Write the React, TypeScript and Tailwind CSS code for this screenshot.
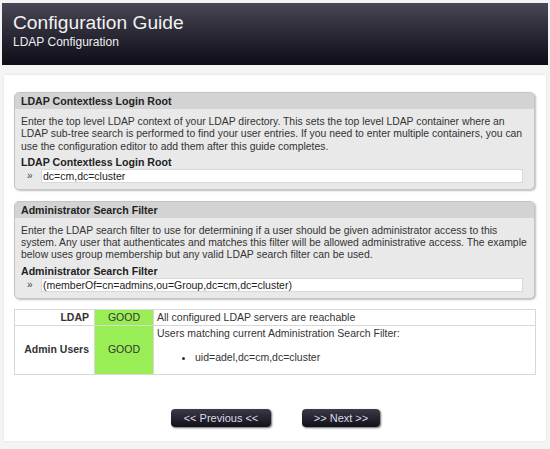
import React from "react";

function Section({
  title,
  text,
  label,
  value,
}: {
  title: string;
  text: string;
  label: string;
  value: string;
}) {
  return (
    <div className="rounded-[5px] border border-[#c4c4c4] bg-[#e9e9e9] shadow-[1px_1px_2px_rgba(0,0,0,0.25)] overflow-hidden">
      <div className="h-[16px] bg-[#d3d3d3] px-[6px] text-[10.6px] font-bold leading-[16px] text-[#222]">
        {title}
      </div>
      <div className="pl-[6px] pr-[3px] pt-[7px] pb-[6px]">
        <p className="text-[10.4px] leading-[12.3px] text-[#333]">{text}</p>
        <div className="mt-[3px] text-[10.6px] font-bold leading-[13px] text-[#222]">{label}</div>
        <div className="flex h-[14px] items-center">
          <span className="w-[20px] pl-[6px] text-[10px] text-[#444]">»</span>
          <div className="h-[14px] flex-1 mr-[8px] border border-[#d8d8d8] bg-white px-[1px] text-[10.5px] leading-[12px] text-[#222]">
            {value}
          </div>
        </div>
      </div>
    </div>
  );
}

export default function App() {
  return (
    <div
      className="h-[449px] w-[550px] bg-[#f4f4f4] pt-[3px]"
      style={{ fontFamily: '"Liberation Sans", Arial, sans-serif' }}
    >
      <div className="mx-[2px] h-[62px] bg-gradient-to-b from-[#4a4756] to-[#0e0d17] px-[11px] pt-[8px]">
        <div className="text-[19.2px] leading-[24px] text-[#f2f2f2]">Configuration Guide</div>
        <div className="text-[12px] leading-[14px] text-[#eeeeee]">LDAP Configuration</div>
      </div>
      <div className="mx-[4px] mt-[10px] h-[366px] bg-white px-[10px] pt-[17px] shadow-[0_0_2px_rgba(0,0,0,0.1)]">
        <div className="mr-[1px]">
          <Section
            title="LDAP Contextless Login Root"
            text="Enter the top level LDAP context of your LDAP directory. This sets the top level LDAP container where an LDAP sub-tree search is performed to find your user entries. If you need to enter multiple containers, you can use the configuration editor to add them after this guide completes."
            label="LDAP Contextless Login Root"
            value="dc=cm,dc=cluster"
          />
        </div>
        <div className="mt-[11px] mr-[1px]">
          <Section
            title="Administrator Search Filter"
            text="Enter the LDAP search filter to use for determining if a user should be given administrator access to this system. Any user that authenticates and matches this filter will be allowed administrative access. The example below uses group membership but any valid LDAP search filter can be used."
            label="Administrator Search Filter"
            value="(memberOf=cn=admins,ou=Group,dc=cm,dc=cluster)"
          />
        </div>
        <table className="mt-[10px] w-[522px] border-collapse border border-[#c8c8c8] text-[10.5px] text-[#333]">
          <tbody>
            <tr className="h-[16px]">
              <td className="w-[80px] border border-[#d8d8d8] pr-[5px] text-right font-bold leading-[14px]">LDAP</td>
              <td className="w-[59px] border border-[#d8d8d8] bg-[#99ee55] text-center leading-[14px]">GOOD</td>
              <td className="border border-[#d8d8d8] px-[3px] leading-[14px]">All configured LDAP servers are reachable</td>
            </tr>
            <tr className="h-[49px]">
              <td className="border border-[#d8d8d8] pr-[5px] text-right font-bold">Admin Users</td>
              <td className="border border-[#d8d8d8] bg-[#99ee55] text-center">GOOD</td>
              <td className="border border-[#d8d8d8] px-[3px] pb-[8px] align-top leading-[14px]">
                <div>Users matching current Administration Search Filter:</div>
                <ul className="mt-[10px] list-disc pl-[38px]">
                  <li>uid=adel,dc=cm,dc=cluster</li>
                </ul>
              </td>
            </tr>
          </tbody>
        </table>
        <div className="mt-[34px] flex justify-center gap-[31px] pl-[1px]">
          <button className="h-[18px] w-[100px] rounded-[4px] bg-gradient-to-b from-[#3c3a48] to-[#12111a] text-[11px] leading-[18px] text-[#dcdce8] shadow-[1px_1px_2px_rgba(0,0,0,0.6)]">
            {"<< Previous <<"}
          </button>
          <button className="h-[18px] w-[78px] rounded-[4px] bg-gradient-to-b from-[#3c3a48] to-[#12111a] text-[11px] leading-[18px] text-[#dcdce8] shadow-[1px_1px_2px_rgba(0,0,0,0.6)]">
            {">> Next >>"}
          </button>
        </div>
      </div>
    </div>
  );
}
